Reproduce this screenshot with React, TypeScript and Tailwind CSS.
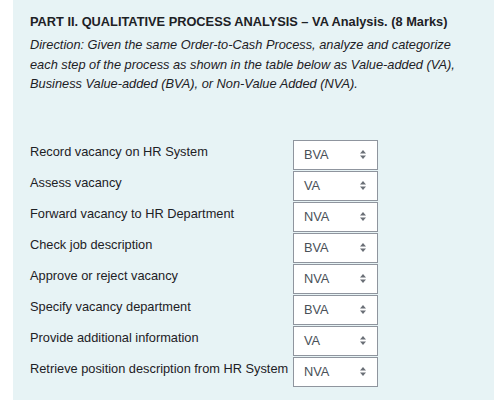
import React from "react";

const rows: [string, string][] = [
  ["Record vacancy on HR System", "BVA"],
  ["Assess vacancy", "VA"],
  ["Forward vacancy to HR Department", "NVA"],
  ["Check job description", "BVA"],
  ["Approve or reject vacancy", "NVA"],
  ["Specify vacancy department", "BVA"],
  ["Provide additional information", "VA"],
  ["Retrieve position description from HR System", "NVA"],
];

function SelectBox({ value }: { value: string }) {
  return (
    <div className="flex h-[30px] w-[85px] items-center justify-between border border-[#8f959e] bg-white pl-[10px] pr-[11px] text-[12.8px] text-[#495057]">
      <span>{value}</span>
      <svg width="6" height="9" viewBox="0 0 6 9" fill="#6a6f76">
        <path d="M3 0 L6 3.5 H0 Z" />
        <path d="M3 9 L6 5.5 H0 Z" />
      </svg>
    </div>
  );
}

export default function App() {
  return (
    <div className="min-h-[400px] bg-white pl-[13px] pr-[2px] font-['Liberation_Sans',Arial,sans-serif] text-[#1d2125]">
      <div className="min-h-[400px] bg-[#e7f3f5] pl-[17px] pr-[25px] pt-[12px]">
        <p className="text-[12.8px] font-bold leading-[20px]">
          PART II. QUALITATIVE PROCESS ANALYSIS – VA Analysis. (8 Marks)
        </p>
        <p className="mt-[3px] text-[12.8px] italic leading-[19.5px]">
          Direction: Given the same Order-to-Cash Process, analyze and categorize each step of the
          process as shown in the table below as Value-added (VA), Business Value-added (BVA), or
          Non-Value Added (NVA).
        </p>
        <div className="mt-[46px] flex flex-col gap-[1px]">
          {rows.map(([label, value]) => (
            <div key={label} className="flex items-start">
              <div className="w-[263px] pt-[2px] text-[12.8px] leading-[20px]">{label}</div>
              <SelectBox value={value} />
            </div>
          ))}
        </div>
      </div>
    </div>
  );
}
